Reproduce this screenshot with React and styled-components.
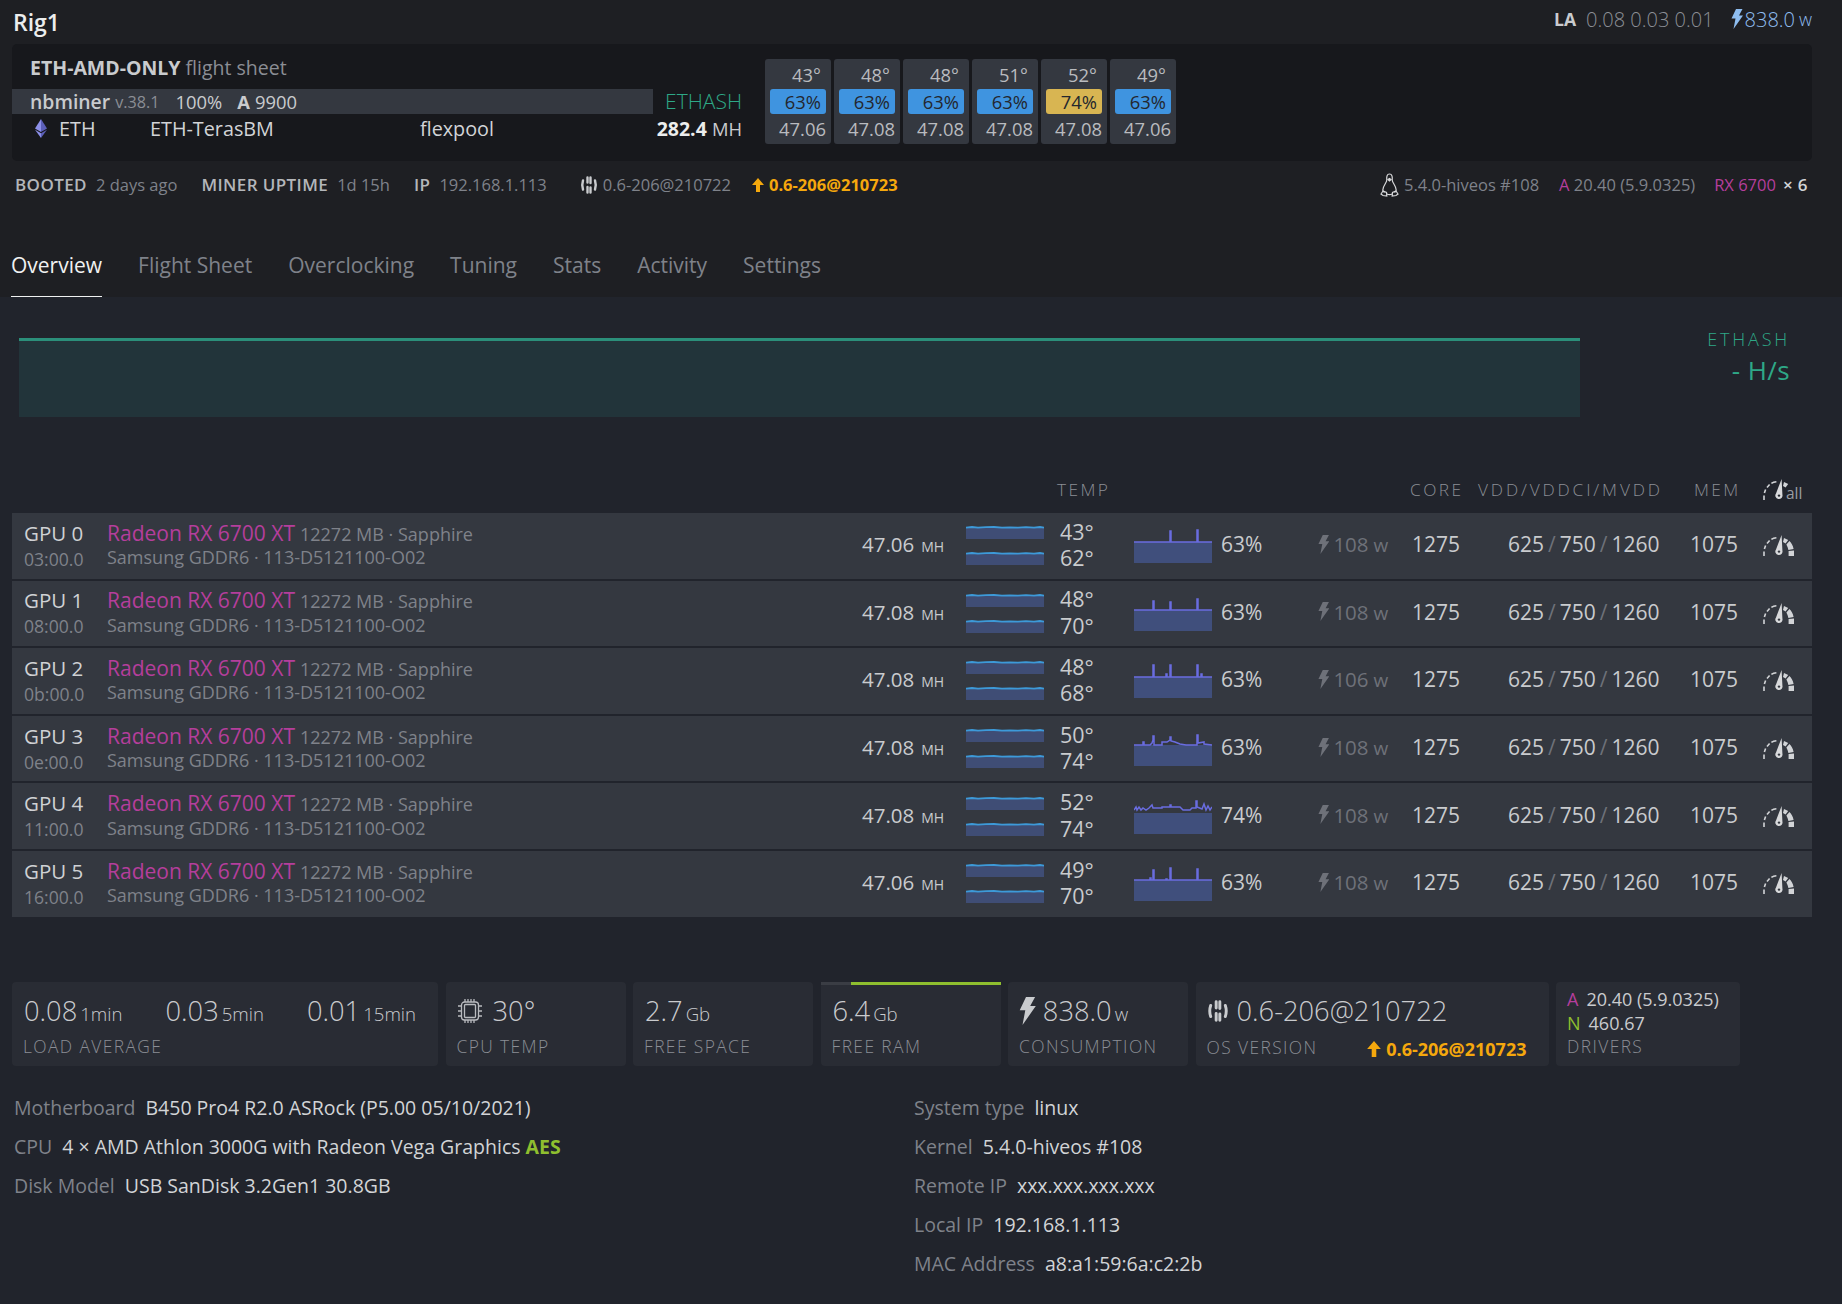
import React from 'react';
import styled, {createGlobalStyle} from 'styled-components';

//-----< Data >-----\\
const gpus = [
    {id: 0, bus: '03:00.0', hash: '47.06', card: '43°', temps: ['43°', '62°'], fan: 63, watt: 108, spikes: [[36, 11], [63, 12]]},
    {id: 1, bus: '08:00.0', hash: '47.08', card: '48°', temps: ['48°', '70°'], fan: 63, watt: 108, spikes: [[19, 9], [36, 8], [63, 11]]},
    {id: 2, bus: '0b:00.0', hash: '47.08', card: '48°', temps: ['48°', '68°'], fan: 63, watt: 106, spikes: [[19, 12], [32, 3], [36, 12], [63, 12], [67, 3]]},
    {id: 3, bus: '0e:00.0', hash: '47.08', card: '51°', temps: ['50°', '74°'], fan: 63, watt: 108, wave: 'M0 14 H9 V11 H10 V14 H16 L18 12 L19 9 V5 H20 V14 H28 V11 L33 11 L36 9 V6 H37 V10 L41 11 L46 13 L52 14 H63 V4 H64 V12 L70 11 V13 L78 14'},
    {id: 4, bus: '11:00.0', hash: '47.08', card: '52°', temps: ['52°', '74°'], fan: 74, watt: 108, wave: 'M0 11 L2 8 L3 11 L5 8 L7 11 L9 9 L12 11 L15 9 L18 6 L19 9 H28 V8 H36 V6 H37 V8 H46 L49 11 H56 L58 9 H62 V2 H63 V8 L68 10 L70 5 L72 11 L74 7 L76 11 L78 8'},
    {id: 5, bus: '16:00.0', hash: '47.06', card: '49°', temps: ['49°', '70°'], fan: 63, watt: 108, spikes: [[16, 2], [19, 10], [32, 1], [36, 12], [63, 11]]},
];

const gridCols = '95px 755px 104px 94px 74px 87px 89px 102px 96px 182px 73px 49px';

//-----< Styling >-----\\
const GlobalStyle = createGlobalStyle`
    body {
        margin: 0;
        background: #21242c;
        color: #d2d4d7;
        font-family: "Open Sans", "Liberation Sans", sans-serif;
        font-size: 18.8px;
    }
    * { box-sizing: border-box; }
`;

const Header = styled.header`
    height: 297px;
    background: #1e1f23;
`;

const TopBar = styled.div`
    display: flex;
    justify-content: space-between;
    align-items: center;
    height: 44px;
    padding: 0 30px 0 13px;
`;

const RigName = styled.h1`
    margin: 0;
    font-size: 23px;
    font-weight: 600;
    color: #eceded;
`;

const TopStats = styled.div`
    display: flex;
    align-items: center;
    margin-top: -6px;
    font-size: 20px;
    font-weight: 300;
    color: #8b8e95;
    b { color: #c9cbce; font-weight: 700; font-size: 17.6px; margin-right: 10px; }
`;

const Power = styled.span`
    display: flex;
    align-items: center;
    margin-left: 17px;
    color: #8ebdf0;
    gap: 2px;
    small { font-size: 18px; margin-left: 2px; }
`;

const Panel = styled.section`
    display: flex;
    height: 117px;
    margin: 0 30px 0 12px;
    padding-top: 15px;
    background: #17181c;
    border-radius: 5px;
`;

const Sheet = styled.div`
    width: 730px;
    margin-top: -15px;
    margin-right: 23px;
`;

const SheetTitle = styled.div`
    height: 45px;
    padding: 10px 0 0 18px;
    font-size: 19.5px;
    line-height: 28px;
    color: #8b8e95;
    b { color: #c9cbce; font-weight: 700; }
`;

const MinerRow = styled.div`
    display: flex;
    height: 25px;
`;

const MinerBar = styled.div`
    display: flex;
    align-items: center;
    width: 641px;
    padding-left: 18px;
    background: #343840;
    font-size: 18.4px;
    color: #c9cbce;
    b { font-size: 19.4px; font-weight: 600; }
    small { font-size: 16.2px; color: #8b8e95; margin: 0 16px 0 5px; }
    strong { font-weight: 700; margin: 0 5px 0 15px; }
`;

const Algo = styled.div`
    flex: 1;
    text-align: right;
    font-size: 21px;
    line-height: 25px;
    font-weight: 300;
    color: #2ea887;
`;

const CoinRow = styled.div`
    display: grid;
    grid-template-columns: 115px 270px 1fr auto;
    align-items: center;
    height: 28px;
    font-size: 19.8px;
    font-weight: 500;
    padding-left: 23px;
`;

const CoinName = styled.span`
    display: flex;
    align-items: center;
    gap: 12px;
    color: #d2d4d7;
`;

const TotalHash = styled.span`
    font-weight: 700;
    font-size: 19.5px;
    color: #eceded;
    small { font-size: 18.4px; font-weight: 400; color: #c9cbce; }
`;

const GpuCards = styled.div`
    display: flex;
    gap: 3px;
`;

const GpuCard = styled.div`
    display: flex;
    flex-direction: column;
    width: 66px;
    height: 85px;
    padding: 0 5px;
    background: #343840;
    border-radius: 3px;
    text-align: right;
    font-size: 18.4px;
    line-height: 30px;
    color: #b9bbbf;
    span:first-child { padding-top: 1px; height: 30px; padding-right: 5px; }
`;

const FanBadge = styled.div`
    height: 25px;
    margin: 0;
    padding-right: 5px;
    border-radius: 3px;
    line-height: 26px;
    background: ${props => props.$hot ? '#d8b552' : '#3f94e0'};
    color: #24272e;
`;

const InfoBar = styled.div`
    display: flex;
    justify-content: space-between;
    align-items: center;
    height: 47px;
    margin-bottom: 1px;
    padding: 0 34px 0 15px;
    font-size: 16.5px;
    color: #7f828a;
`;

const InfoGroup = styled.div`
    display: flex;
    align-items: center;
`;

const InfoLabel = styled.b`
    color: ${props => props.$bright ? '#d2d4d7' : '#b4b6ba'};
    font-size: 17px;
    font-weight: 600;
    letter-spacing: .4px;
    margin: 0 ${props => props.$bright ? 0 : 9}px 0 ${props => props.$gap || 0}px;
`;

const Version = styled.span`
    display: flex;
    align-items: center;
    gap: 5px;
    margin-left: ${props => props.$gap || 0}px;
`;

const Update = styled.span`
    display: flex;
    align-items: center;
    gap: 4px;
    margin-left: 20px;
    color: #f5a80d;
    font-weight: 700;
`;

const Amd = styled.span`
    color: #b53e9c;
    font-weight: 400;
    margin-left: ${props => props.$gap || 0}px;
`;

const Tabs = styled.nav`
    display: flex;
    gap: 36px;
    height: 75px;
    margin-top: 12px;
    padding: 0 0 0 11px;
`;

const Tab = styled.a`
    display: flex;
    align-items: center;
    height: 77px;
    padding-top: 13px;
    font-size: 21px;
    color: ${props => props.$active ? '#f0f1f1' : '#7f828a'};
    border-bottom: 1px solid ${props => props.$active ? '#f0f1f1' : 'transparent'};
`;

const ChartArea = styled.section`
    display: flex;
    justify-content: space-between;
    padding: 41px 52px 0 19px;
`;

const HashChart = styled.div`
    width: 1561px;
    height: 79px;
    background: #22343a;
    border-top: 3px solid #2b8f7a;
`;

const ChartLegend = styled.div`
    text-align: right;
    color: #2ea887;
    font-size: 18px;
    letter-spacing: 2.8px;
    line-height: 22px;
    font-weight: 300;
    margin-top: -10px;
    strong { display: block; font-weight: 400; font-size: 26px; line-height: 36px; margin-top: 2px; letter-spacing: .4px; }
`;

const Table = styled.section`
    margin: 53px 30px 0 12px;
`;

const HeadRow = styled.div`
    display: grid;
    grid-template-columns: ${gridCols};
    align-items: center;
    height: 43px;
    padding-bottom: 5px;
    font-size: 17.3px;
    letter-spacing: 2.45px;
    font-weight: 300;
    color: #8b8e95;
`;

const HeadCell = styled.span`
    grid-column: ${props => props.$col};
    margin-left: ${props => props.$offset || 0}px;
    white-space: nowrap;
    letter-spacing: ${props => props.$spacing || 2.45}px;
`;

const HeadEnd = styled.div`
    display: flex;
    align-items: flex-end;
    grid-column: 12;
    letter-spacing: 0;
    font-size: 15.5px;
    font-weight: 400;
    color: #9a9da3;
    span { margin: 0 0 -4px -8px; }
`;

const Rows = styled.div`
    display: grid;
    gap: 2px;
`;

const Row = styled.div`
    display: grid;
    grid-template-columns: ${gridCols};
    align-items: center;
    height: 65.6px;
    background: #343840;
`;

const GpuId = styled.div`
    padding-left: 12px;
    line-height: 26px;
    font-size: 20.5px;
    color: #cfd1d4;
    small { display: block; font-size: 17.6px; color: #7f828a; }
`;

const GpuName = styled.div`
    line-height: 23.5px;
    font-size: 18px;
    color: #7f828a;
    em { font-style: normal; font-size: 21px; color: #b53e9c; margin-right: 5px; }
`;

const Hash = styled.div`
    margin-top: -3px;
    font-size: 20.5px;
    color: #c9cbce;
    small { font-size: 14px; margin-left: 7px; }
`;

const Stack = styled.div`
    display: flex;
    flex-direction: column;
    gap: ${props => props.$gap || 0}px;
`;

const TempValues = styled.div`
    line-height: 26.5px;
    margin-top: -1px;
    font-size: 21.5px;
    color: #c9cbce;
`;

const Fan = styled.div`
    margin-top: -3px;
    font-size: 21px;
    color: #c9cbce;
`;

const Watts = styled.div`
    display: flex;
    align-items: center;
    justify-content: flex-start;
    margin-top: -3px;
    padding-left: 8px;
    gap: 4px;
    font-size: 20.5px;
    color: #6e7179;
    small { font-size: 19px; }
`;

const Num = styled.div`
    margin-top: -3px;
    font-size: 21px;
    color: #c9cbce;
    small { font-size: 21px; color: #6e7179; margin: 0 4px; }
`;

const StatCards = styled.section`
    display: flex;
    gap: 7.5px;
    margin: 65px 0 0 12px;
`;

const StatCard = styled.div`
    position: relative;
    flex: none;
    width: ${props => props.$w}px;
    height: 84px;
    padding: 10px 11px 0 11px;
    background: #292c34;
    border-radius: 4px;
`;

const RamBar = styled.div`
    position: absolute;
    left: 0;
    top: 0;
    width: 100%;
    height: 3px;
    background: #3a3d44;
    &::after {
        content: '';
        position: absolute;
        right: 0;
        top: 0;
        width: 83%;
        height: 3px;
        background: #8fbf2f;
    }
`;

const StatValues = styled.div`
    display: flex;
    align-items: center;
    gap: ${props => props.$gap || 0}px;
    height: 38px;
    font-size: 27.3px;
    font-weight: 300;
    color: #c9cbce;
`;

const Value = styled.span`
    display: inline-flex;
    align-items: baseline;
    padding-left: 1px;
    small { font-size: 18.6px; margin-left: 3px; }
`;

const StatFooter = styled.div`
    display: flex;
    justify-content: space-between;
    align-items: center;
    margin-top: ${props => props.$tight ? 0 : 5}px;
    font-size: 17.4px;
    font-weight: 300;
    letter-spacing: 1.4px;
    line-height: 22px;
    color: #8b8e95;
`;

const CardUpdate = styled(Update)`
    margin: 3px 11px 0 0;
    font-size: 18px;
    letter-spacing: 0;
`;

const DriverLine = styled.div`
    display: flex;
    align-items: center;
    gap: 8px;
    height: 24px;
    margin-top: ${props => props.$first ? -5 : 0}px;
    font-size: 18px;
    color: #c9cbce;
    i { font-style: normal; color: ${props => props.$color}; font-size: 18px; }
`;

const Specs = styled.section`
    display: grid;
    grid-template-columns: 900px 1fr;
    margin-top: 22px;
    padding-left: 14px;
`;

const Spec = styled.div`
    height: 39px;
    line-height: 39px;
    font-size: 19.5px;
    color: #d2d4d7;
    span { color: #7f828a; margin-right: 10px; }
    b { color: #8fbf2f; font-weight: 700; }
`;

//-----< Icons >-----\\
const Bolt = ({size = 20, color = 'currentColor'}) => (
    <svg width={size * .6} height={size} viewBox="0 0 12 20" fill={color}>
        <path d="M5 0 L11.5 0 L8 6.5 L12 6.5 L2.5 20 L4.5 9.5 L0.5 9.5 Z" />
    </svg>
);

const EthIcon = () => (
    <svg width="12" height="21" viewBox="0 0 14 22">
        <path d="M7 0 L0 11 L7 15 Z" fill="#8c8fe8" />
        <path d="M7 0 L14 11 L7 15 Z" fill="#5c5fb8" />
        <path d="M0 12.5 L7 22 L7 16.5 Z" fill="#8c8fe8" />
        <path d="M14 12.5 L7 22 L7 16.5 Z" fill="#5c5fb8" />
    </svg>
);

const ArrowUp = ({size = 14}) => (
    <svg width={size} height={size} viewBox="0 0 14 14" fill="#f5a80d">
        <path d="M7 0 L13 7 H9 V14 H5 V7 H1 Z" />
    </svg>
);

const HiveLogo = ({size = 18, color = '#c9cbce'}) => (
    <svg width={size} height={size} viewBox="0 0 18 18" fill="none" stroke={color} strokeWidth="2.4" strokeLinecap="round">
        <path d="M3 4.5 Q1.5 9 3 13.5" />
        <path d="M15 4.5 Q16.5 9 15 13.5" />
        <path d="M7.5 1.5 V6.5 M7.5 11 V16.5 M10.5 1.5 V7 M10.5 11.5 V16.5" />
    </svg>
);

const Tux = () => (
    <svg width="19" height="24" viewBox="0 0 19 24" fill="none" stroke="#d8d9db" strokeWidth="1.2">
        <path d="M9.5 1 C6.8 1 6.5 4 6.8 7 C6.8 10 3 12.5 2.8 17 C2.8 18.5 3.4 19 4.5 19.5 M9.5 1 C12.2 1 12.5 4 12.2 7 C12.2 10 16 12.5 16.2 17 C16.2 18.5 15.6 19 14.5 19.5" />
        <path d="M6.8 21 C8.5 21.8 10.5 21.8 12.2 21" />
        <path d="M3 18 L1 21 L3 22.5 L6.8 23 L6.5 19.5 Z" />
        <path d="M16 18 L18 21 L16 22.5 L12.2 23 L12.5 19.5 Z" />
        <path d="M8 6.5 L9.5 5.5 L11 6.5 L9.5 8 Z" fill="#d8d9db" />
    </svg>
);

const Chip = () => (
    <svg width="26" height="26" viewBox="0 0 26 26" fill="none" stroke="#b9bbbf" strokeWidth="1.3">
        <rect x="4.5" y="4" width="17" height="18" rx="3" />
        <rect x="7.5" y="6.5" width="11" height="13" rx="1" />
        <path d="M8 1 V4 M11 1 V4 M14 1 V4 M17 1 V4 M8 22 V25 M11 22 V25 M14 22 V25 M17 22 V25 M1 8 H4 M1 13 H4 M1 18 H4 M22 8 H25 M22 13 H25 M22 18 H25" />
    </svg>
);

const Gauge = ({full}) => (
    <svg width="31" height="21" viewBox="0 0 31 21" fill="none" style={{display: 'block'}}>
        <path d="M1 21 V16.5 M1.4 14 L2.6 10.6 M4 8.6 L6.6 5.6 M8.4 4.4 C10 3.4 11.6 3 13.4 2.8" stroke="#d2d4d7" strokeWidth="1.6" />
        <path d="M18.6 0 L13 14.4 A3.6 3.6 0 1 0 19.4 15.6 Z" fill="#d8d9db" />
        <circle cx="16" cy="16.6" r="1.2" fill={full ? '#343840' : '#21242c'} />
        <path d="M21 3 L25.2 5 L22.6 8.4 L20 7 Z" fill="#d2d4d7" />
        {full && <path d="M26.4 6 C28.4 8 30 10.6 30.6 14 L25.4 15 C25 13 24.4 11.4 23.4 9.6 Z" fill="#d2d4d7" />}
        {full && <path d="M25.6 16 L31 15.4 V21 H25.6 Z" fill="#d2d4d7" />}
    </svg>
);

const TempChart = () => {
    const line = 'M0 1.6 L6 1 L12 1.6 L20 1.2 L28 1 L36 1.6 L44 1.4 L52 1.6 L60 1.2 L68 1.6 L74 1 L78 1.6';
    return (
        <svg width="78" height="13" viewBox="0 0 78 13" style={{display: 'block'}}>
            <rect y="1" width="78" height="12" fill="#3f4d75" />
            <path d={line} fill="none" stroke="#3d9ad9" strokeWidth="1.8" />
        </svg>
    );
};

const FanChart = ({spikes, wave}) => {
    const line = wave || (
        'M0 14 ' + spikes.map(([x, h]) => `H${x} V${14 - h} H${x + 1} V14`).join(' ') + ' H78'
    );
    return (
        <svg width="78" height="35" viewBox="0 0 78 35" style={{display: 'block'}}>
            <rect y="14" width="78" height="21" fill="#404f7c" />
            <path d={line} fill="none" stroke="#696ce0" strokeWidth="1.5" />
        </svg>
    );
};

//-----< Component Function >-----\\
export default function App(){
    return (
        <>
            <GlobalStyle />
            <Header>
                <TopBar>
                    <RigName>Rig1</RigName>
                    <TopStats>
                        <b>LA</b> 0.08 0.03 0.01
                        <Power><Bolt size={20} />838.0<small>w</small></Power>
                    </TopStats>
                </TopBar>
                <Panel>
                    <Sheet>
                        <SheetTitle><b>ETH-AMD-ONLY</b> flight sheet</SheetTitle>
                        <MinerRow>
                            <MinerBar>
                                <b>nbminer</b><small>v.38.1</small>100%<strong>A</strong>9900
                            </MinerBar>
                            <Algo>ETHASH</Algo>
                        </MinerRow>
                        <CoinRow>
                            <CoinName><EthIcon />ETH</CoinName>
                            <span>ETH-TerasBM</span>
                            <span>flexpool</span>
                            <TotalHash>282.4 <small>MH</small></TotalHash>
                        </CoinRow>
                    </Sheet>
                    <GpuCards>
                        {gpus.map(gpu => (
                            <GpuCard key={gpu.id}>
                                <span>{gpu.card}</span>
                                <FanBadge $hot={gpu.fan > 70}>{gpu.fan}%</FanBadge>
                                <span>{gpu.hash}</span>
                            </GpuCard>
                        ))}
                    </GpuCards>
                </Panel>
                <InfoBar>
                    <InfoGroup>
                        <InfoLabel>BOOTED</InfoLabel>2 days ago
                        <InfoLabel $gap={24}>MINER UPTIME</InfoLabel>1d 15h
                        <InfoLabel $gap={24}>IP</InfoLabel>192.168.1.113
                        <Version $gap={33}><HiveLogo />0.6-206@210722</Version>
                        <Update><ArrowUp />0.6-206@210723</Update>
                    </InfoGroup>
                    <InfoGroup>
                        <Version><Tux />5.4.0-hiveos #108</Version>
                        <Amd $gap={20}>A</Amd>&nbsp;20.40 (5.9.0325)
                        <Amd $gap={19}>RX 6700</Amd>
                        <InfoLabel $bright $gap={7}>× 6</InfoLabel>
                    </InfoGroup>
                </InfoBar>
                <Tabs>
                    <Tab $active>Overview</Tab>
                    <Tab>Flight Sheet</Tab>
                    <Tab>Overclocking</Tab>
                    <Tab>Tuning</Tab>
                    <Tab>Stats</Tab>
                    <Tab>Activity</Tab>
                    <Tab>Settings</Tab>
                </Tabs>
            </Header>

            <ChartArea>
                <HashChart />
                <ChartLegend>
                    ETHASH
                    <strong>- H/s</strong>
                </ChartLegend>
            </ChartArea>

            <Table>
                <HeadRow>
                    <HeadCell $col="4 / 6" $offset={91}>TEMP</HeadCell>
                    <HeadCell $col={9} $offset={-2}>CORE</HeadCell>
                    <HeadCell $col={10} $offset={-30} $spacing={2.85}>VDD/VDDCI/MVDD</HeadCell>
                    <HeadCell $col={11} $offset={4}>MEM</HeadCell>
                    <HeadEnd><Gauge /><span>all</span></HeadEnd>
                </HeadRow>
                <Rows>
                    {gpus.map(gpu => (
                        <Row key={gpu.id}>
                            <GpuId>GPU {gpu.id}<small>{gpu.bus}</small></GpuId>
                            <GpuName>
                                <em>Radeon RX 6700 XT</em>12272 MB · Sapphire<br />
                                Samsung GDDR6 · 113-D5121100-O02
                            </GpuName>
                            <Hash>{gpu.hash}<small>MH</small></Hash>
                            <Stack $gap={13}><TempChart /><TempChart /></Stack>
                            <TempValues>{gpu.temps[0]}<br />{gpu.temps[1]}</TempValues>
                            <FanChart spikes={gpu.spikes} wave={gpu.wave} />
                            <Fan>{gpu.fan}%</Fan>
                            <Watts><Bolt size={19} color="#6e7179" /><span>{gpu.watt}<small> w</small></span></Watts>
                            <Num>1275</Num>
                            <Num>625<small>/</small>750<small>/</small>1260</Num>
                            <Num>1075</Num>
                            <Gauge full />
                        </Row>
                    ))}
                </Rows>
            </Table>

            <StatCards>
                <StatCard $w={426}>
                    <StatValues $gap={42}>
                        <Value>0.08<small>1min</small></Value>
                        <Value>0.03<small>5min</small></Value>
                        <Value>0.01<small>15min</small></Value>
                    </StatValues>
                    <StatFooter>LOAD AVERAGE</StatFooter>
                </StatCard>
                <StatCard $w={180}>
                    <StatValues $gap={9}><Chip /><Value>30°</Value></StatValues>
                    <StatFooter>CPU TEMP</StatFooter>
                </StatCard>
                <StatCard $w={180}>
                    <StatValues><Value>2.7<small>Gb</small></Value></StatValues>
                    <StatFooter>FREE SPACE</StatFooter>
                </StatCard>
                <StatCard $w={180}>
                    <RamBar />
                    <StatValues><Value>6.4<small>Gb</small></Value></StatValues>
                    <StatFooter>FREE RAM</StatFooter>
                </StatCard>
                <StatCard $w={180}>
                    <StatValues $gap={6}><Bolt size={28} color="#c9cbce" /><Value>838.0<small>w</small></Value></StatValues>
                    <StatFooter>CONSUMPTION</StatFooter>
                </StatCard>
                <StatCard $w={353}>
                    <StatValues $gap={7}><HiveLogo size={22} /><Value>0.6-206@210722</Value></StatValues>
                    <StatFooter>OS VERSION<CardUpdate><ArrowUp size={16} />0.6-206@210723</CardUpdate></StatFooter>
                </StatCard>
                <StatCard $w={184}>
                    <DriverLine $first $color="#b53e9c"><i>A</i>20.40 (5.9.0325)</DriverLine>
                    <DriverLine $color="#8fbf2f"><i>N</i>460.67</DriverLine>
                    <StatFooter $tight>DRIVERS</StatFooter>
                </StatCard>
            </StatCards>

            <Specs>
                <div>
                    <Spec><span>Motherboard</span>B450 Pro4 R2.0 ASRock (P5.00 05/10/2021)</Spec>
                    <Spec><span>CPU</span>4 × AMD Athlon 3000G with Radeon Vega Graphics <b>AES</b></Spec>
                    <Spec><span>Disk Model</span>USB SanDisk 3.2Gen1 30.8GB</Spec>
                </div>
                <div>
                    <Spec><span>System type</span>linux</Spec>
                    <Spec><span>Kernel</span>5.4.0-hiveos #108</Spec>
                    <Spec><span>Remote IP</span>xxx.xxx.xxx.xxx</Spec>
                    <Spec><span>Local IP</span>192.168.1.113</Spec>
                    <Spec><span>MAC Address</span>a8:a1:59:6a:c2:2b</Spec>
                </div>
            </Specs>
        </>
    );
}
